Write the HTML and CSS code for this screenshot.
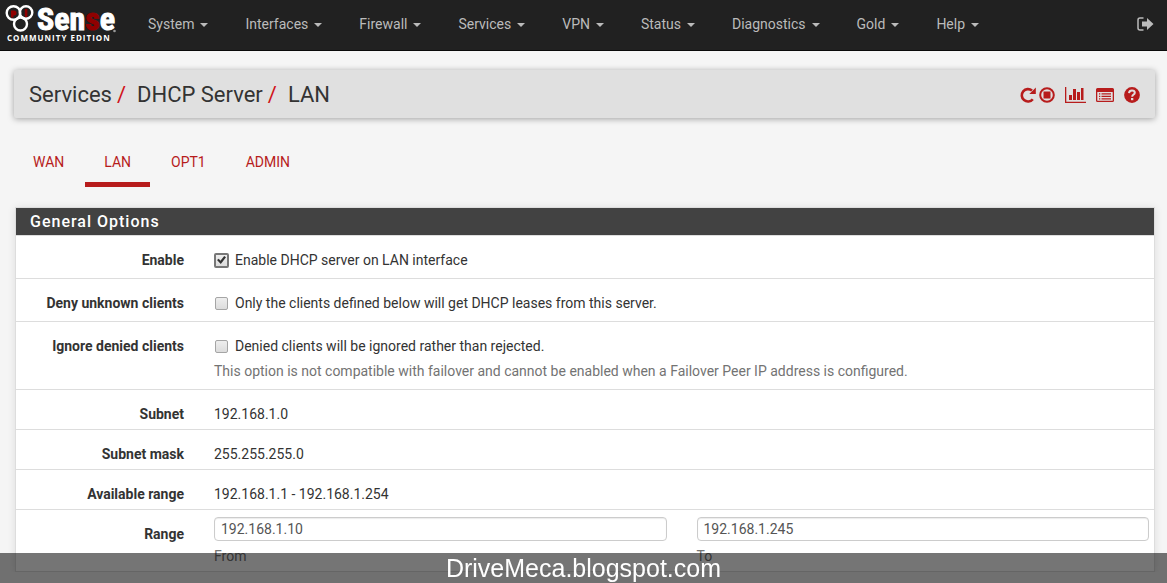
FILE: index.html
```html
<!DOCTYPE html>
<html lang="en">
<head>
<meta charset="utf-8">
<meta name="viewport" content="width=device-width, initial-scale=1">
<title>Services: DHCP Server: LAN</title>
<link rel="stylesheet" href="styles.css">
</head>
<body>
<header class="navbar">
  <a class="brand" href="#" aria-label="pfSense Community Edition">
    <svg width="112" height="40" viewBox="0 0 112 40">
      <g fill="none" stroke="#fff" stroke-width="2.4">
        <circle cx="7.500" cy="9" r="6.800"/>
        <circle cx="20" cy="8.500" r="6.300"/>
        <circle cx="14.500" cy="20" r="6.500"/>
      </g>
      <path d="M5 6.500h3q2.500 0 2.500 2.500T8 11.500H7.500v2H5z" fill="#900000"/>
      <path d="M18.800 5h2.600v8h-2.600z" fill="#900000"/>
      <text class="logo-name" x="31" y="26">Sen<tspan class="logo-red">s</tspan>e</text>
      <text class="logo-edition" x="1" y="37">COMMUNITY EDITION</text>
      <circle cx="108.500" cy="27" r="1.300" fill="#999"/>
    </svg>
  </a>
  <nav class="menu">
    <a class="caret" href="#">System</a>
    <a class="caret" href="#">Interfaces</a>
    <a class="caret" href="#">Firewall</a>
    <a class="caret" href="#">Services</a>
    <a class="caret" href="#">VPN</a>
    <a class="caret" href="#">Status</a>
    <a class="caret" href="#">Diagnostics</a>
    <a class="caret" href="#">Gold</a>
    <a class="caret" href="#">Help</a>
  </nav>
  <a class="logout" href="#" aria-label="Logout">
    <svg width="17" height="14" viewBox="0 0 17 14">
      <path d="M6.500 1H3Q1 1 1 3v8q0 2 2 2h3.500" fill="none" stroke="#bbb" stroke-width="1.500"/>
      <path d="M5 4.500h5V1l6.500 6L10 13V9.500H5z" fill="#bbb"/>
    </svg>
  </a>
</header>

<main class="page">
  <div class="titlebar">
    <h1 class="crumbs">Services<span class="slash">/</span>DHCP Server<span class="slash">/</span>LAN</h1>
    <div class="actions">
      <a href="#" aria-label="Restart service">
        <svg width="16" height="16" viewBox="0 0 16 16"><path d="M12.800 12.200A6.200 6.200 0 1 1 12 3.600" fill="none" stroke="#b71c1c" stroke-width="2.600"/><path d="M15.800 .5v6.500H9.300z" fill="#b71c1c"/></svg>
      </a>
      <a class="action-stop" href="#" aria-label="Stop service">
        <svg width="16" height="16" viewBox="0 0 16 16"><circle cx="8" cy="8" r="6.800" fill="none" stroke="#b71c1c" stroke-width="2"/><path d="M4.500 4.500h7v7h-7z" fill="#b71c1c"/></svg>
      </a>
      <a class="action-gap" href="#" aria-label="Monitoring">
        <svg width="21" height="16" viewBox="0 0 21 16"><path d="M0 0h1.300v14.700H21V16H0zM4 8h3v5H4zM8 2h3v11H8zM12 5h3v8h-3zM16 1h2.500v12H16z" fill="#b71c1c"/></svg>
      </a>
      <a class="action-gap" href="#" aria-label="Logs">
        <svg width="18" height="16" viewBox="0 0 18 16"><path fill-rule="evenodd" d="M1.500 1h15Q18 1 18 2.500v11q0 1.500-1.500 1.500h-15Q0 15 0 13.500v-11Q0 1 1.500 1zM1.300 5v8.700h15.400V5zM3 6.200h1.300v1.300H3zM5.500 6.200H15v1.300H5.500zM3 8.700h1.300V10H3zM5.500 8.700H15V10H5.500zM3 11.200h1.300v1.300H3zM5.500 11.200H15v1.300H5.500z" fill="#b71c1c"/></svg>
      </a>
      <a class="action-gap" href="#" aria-label="Help">
        <svg width="16" height="16" viewBox="0 0 16 16"><circle cx="8" cy="8" r="7.900" fill="#b71c1c"/><path d="M5 6.200Q5.300 3.600 8 3.600t2.800 2.200Q10.800 7 9.500 7.700T8.200 9.700" fill="none" stroke="#e0e0e0" stroke-width="2"/><path d="M7 11h2.300v2.200H7z" fill="#e0e0e0"/></svg>
      </a>
    </div>
  </div>

  <nav class="tabs">
    <a href="#">WAN</a>
    <a class="active" href="#" aria-current="page">LAN</a>
    <a href="#">OPT1</a>
    <a href="#">ADMIN</a>
  </nav>

  <form>
    <section class="panel">
      <h2 class="panel-title">General Options</h2>
      <div class="row">
        <label class="name" for="enable">Enable</label>
        <div class="field">
          <label class="check"><input id="enable" type="checkbox" checked>Enable DHCP server on LAN interface</label>
        </div>
      </div>
      <div class="row">
        <label class="name" for="deny">Deny unknown clients</label>
        <div class="field">
          <label class="check"><input id="deny" type="checkbox">Only the clients defined below will get DHCP leases from this server.</label>
        </div>
      </div>
      <div class="row">
        <label class="name" for="ignore">Ignore denied clients</label>
        <div class="field">
          <label class="check"><input id="ignore" type="checkbox">Denied clients will be ignored rather than rejected.</label>
          <p class="help">This option is not compatible with failover and cannot be enabled when a Failover Peer IP address is configured.</p>
        </div>
      </div>
      <div class="row">
        <span class="name">Subnet</span>
        <div class="field static">192.168.1.0</div>
      </div>
      <div class="row">
        <span class="name">Subnet mask</span>
        <div class="field static">255.255.255.0</div>
      </div>
      <div class="row">
        <span class="name">Available range</span>
        <div class="field static">192.168.1.1 - 192.168.1.254</div>
      </div>
      <div class="row">
        <span class="name">Range</span>
        <div class="range">
          <div class="bound"><input class="text" id="from" type="text" value="192.168.1.10"><label class="help" for="from">From</label></div>
          <div class="bound"><input class="text" id="to" type="text" value="192.168.1.245"><label class="help" for="to">To</label></div>
        </div>
      </div>
    </section>
  </form>
</main>
<footer class="watermark">DriveMeca.blogspot.com</footer>
</body>
</html>
```
FILE: styles.css
```css
* {
  box-sizing: border-box;
}

body {
  margin: 0;
  background: #f5f5f5;
  color: #333;
  font: 14px/20px Roboto, "Liberation Sans", sans-serif;
}

a {
  color: #b71c1c;
  text-decoration: none;
}

svg {
  display: block;
  overflow: visible;
}

.navbar {
  display: flex;
  align-items: center;
  padding: 0 13px 2px 6px;
  height: 51px;
  background: #212121;
  border-bottom: 1px solid #090909;
}

.brand {
  width: 112px;
  margin-right: 30px;
}

.logo-name {
  font: bold 32px "Liberation Sans Narrow", "Roboto Condensed", "DejaVu Sans Condensed", sans-serif;
  fill: #fff;
  stroke: #fff;
  stroke-width: 1px;
}

.logo-red {
  fill: #900000;
  stroke: #900000;
}

.logo-edition {
  font: bold 8px "Open Sans", sans-serif;
  letter-spacing: 1px;
  fill: #fff;
}

.menu {
  display: flex;
  gap: 37px;
}

.menu a {
  color: #bbb;
}

.caret::after {
  content: "";
  display: inline-block;
  margin-left: 6px;
  vertical-align: middle;
  border-top: 4px solid;
  border-left: 4px solid transparent;
  border-right: 4px solid transparent;
}

.logout {
  margin-left: auto;
}

.page {
  padding: 19px 12px 0 14px;
}

.titlebar {
  display: flex;
  align-items: center;
  justify-content: space-between;
  height: 48px;
  padding: 1px 15px 0;
  background: #e0e0e0;
  border-radius: 2px;
  box-shadow: 0 1px 6px rgba(0, 0, 0, 0.35);
}

.crumbs {
  margin: 0;
  font-size: 22px;
  line-height: 24px;
  font-weight: 400;
}

.slash {
  margin: 0 11px 0 5px;
  color: #d0131b;
}

.actions {
  display: flex;
  align-items: center;
}

.action-stop {
  margin-left: 3px;
}

.action-gap {
  margin-left: 10px;
}

.tabs {
  display: flex;
  gap: 2px;
  margin: 24px 0 20px;
}

.tabs a {
  padding: 10px 19px;
  border-bottom: 5px solid transparent;
}

.tabs .active {
  border-color: #b71c1c;
}

.panel {
  margin: 0 0 0 1px;
  background: #fff;
  border: 1px solid #ddd;
  box-shadow: 0 1px 8px rgba(0, 0, 0, 0.1);
}

.panel-title {
  margin: 0;
  padding: 4px 14px 3px;
  background: #424242;
  color: #fff;
  font-size: 16px;
  line-height: 20px;
  font-weight: 500;
  letter-spacing: 1px;
}

.row {
  display: grid;
  grid-template-columns: 168px 1fr;
  column-gap: 30px;
  border-top: 1px solid #ddd;
}

.name {
  padding-top: 14px;
  text-align: right;
  font-weight: 700;
}

.field {
  padding: 14px 5px 8px 0;
}

.static {
  padding-bottom: 5px;
}

.check {
  display: flex;
  align-items: center;
}

.check input {
  appearance: none;
  display: grid;
  place-items: center;
  width: 13px;
  height: 13px;
  margin: 0 7px 0 1px;
  border: 1px solid #a5a5a5;
  border-radius: 2px;
  background: linear-gradient(#eee, #dcdcdc);
}

.check input:checked {
  width: 15px;
  height: 15px;
  margin: 0 6px 0 0;
  border: 2px solid #777;
}

.check input:checked::after {
  content: "";
  width: 9px;
  height: 8px;
  background: #333;
  clip-path: polygon(0 50%, 20% 35%, 38% 60%, 80% 0, 100% 15%, 42% 100%);
}

.help {
  display: block;
  margin: 5px 0 0;
  color: #737373;
}

.range {
  display: grid;
  grid-template-columns: 1fr 1fr;
  gap: 30px;
  padding: 7px 5px 5px 0;
}

.text {
  display: block;
  width: 100%;
  height: 24px;
  padding: 0 6px;
  border: 1px solid #ccc;
  border-radius: 4px;
  box-shadow: inset 0 1px 1px rgba(0, 0, 0, 0.08);
  background: #fff;
  color: #555;
  font: inherit;
}

.watermark {
  position: fixed;
  left: 0;
  right: 0;
  bottom: 0;
  height: 30px;
  background: rgba(0, 0, 0, 0.54);
  color: #fff;
  font: 25px/30px "Liberation Sans", Arial, sans-serif;
  text-align: center;
}
```
